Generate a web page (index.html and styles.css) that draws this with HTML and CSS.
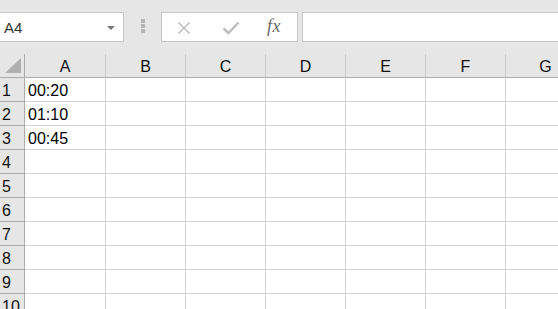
FILE: index.html
```html
<!DOCTYPE html>
<html>
<head>
<meta charset="utf-8">
<link rel="stylesheet" href="styles.css">
</head>
<body>
<div class="toolbar">
  <div class="namebox">
    <span class="name">A4</span>
    <span class="caret"></span>
  </div>
  <div class="grip"><i></i><i></i><i></i></div>
  <div class="buttons">
    <svg class="ico" width="14" height="14" viewBox="0 0 14 14"><path d="M1.5 1.5 L12.5 12.5 M12.5 1.5 L1.5 12.5" stroke="#bdbdbd" stroke-width="1.6" fill="none"/></svg>
    <svg class="ico" width="18" height="14" viewBox="0 0 18 14"><path d="M1.5 7.5 L6.5 12 L16.5 1.5" stroke="#bdbdbd" stroke-width="2.4" fill="none"/></svg>
    <span class="fx">fx</span>
  </div>
  <div class="formula"></div>
</div>
<div class="sheet">
  <div class="row head">
    <div class="rh corner"><span class="tri"></span></div>
    <div class="ch wide">A</div><div class="ch">B</div><div class="ch">C</div><div class="ch">D</div><div class="ch">E</div><div class="ch">F</div><div class="ch">G</div>
  </div>
  <div class="row"><div class="rh">1</div><div class="c wide">00:20</div><div class="c"></div><div class="c"></div><div class="c"></div><div class="c"></div><div class="c"></div><div class="c"></div></div>
  <div class="row"><div class="rh">2</div><div class="c wide">01:10</div><div class="c"></div><div class="c"></div><div class="c"></div><div class="c"></div><div class="c"></div><div class="c"></div></div>
  <div class="row"><div class="rh">3</div><div class="c wide">00:45</div><div class="c"></div><div class="c"></div><div class="c"></div><div class="c"></div><div class="c"></div><div class="c"></div></div>
  <div class="row"><div class="rh">4</div><div class="c wide"></div><div class="c"></div><div class="c"></div><div class="c"></div><div class="c"></div><div class="c"></div><div class="c"></div></div>
  <div class="row"><div class="rh">5</div><div class="c wide"></div><div class="c"></div><div class="c"></div><div class="c"></div><div class="c"></div><div class="c"></div><div class="c"></div></div>
  <div class="row"><div class="rh">6</div><div class="c wide"></div><div class="c"></div><div class="c"></div><div class="c"></div><div class="c"></div><div class="c"></div><div class="c"></div></div>
  <div class="row"><div class="rh">7</div><div class="c wide"></div><div class="c"></div><div class="c"></div><div class="c"></div><div class="c"></div><div class="c"></div><div class="c"></div></div>
  <div class="row"><div class="rh">8</div><div class="c wide"></div><div class="c"></div><div class="c"></div><div class="c"></div><div class="c"></div><div class="c"></div><div class="c"></div></div>
  <div class="row"><div class="rh">9</div><div class="c wide"></div><div class="c"></div><div class="c"></div><div class="c"></div><div class="c"></div><div class="c"></div><div class="c"></div></div>
  <div class="row"><div class="rh">10</div><div class="c wide"></div><div class="c"></div><div class="c"></div><div class="c"></div><div class="c"></div><div class="c"></div><div class="c"></div></div>
</div>
</body>
</html>
```

FILE: styles.css
```css
html, body {
  margin: 0;
  padding: 0;
  background: #e6e6e6;
  overflow: hidden;
  font-family: "Liberation Sans", Arial, sans-serif;
}
* { box-sizing: border-box; }

.toolbar {
  height: 54px;
  display: flex;
  align-items: flex-start;
  padding-top: 12px;
}
.namebox {
  width: 124px;
  height: 30px;
  background: #fff;
  border: 1px solid #c6c6c6;
  border-left: none;
  display: flex;
  align-items: center;
  justify-content: space-between;
  padding: 0 8px 0 4px;
}
.name {
  font-size: 15px;
  color: #333;
}
.caret {
  width: 0;
  height: 0;
  border-left: 4px solid transparent;
  border-right: 4px solid transparent;
  border-top: 4px solid #777;
  margin-top: 1px;
}
.grip {
  width: 37px;
  height: 30px;
  display: flex;
  flex-direction: column;
  align-items: center;
  justify-content: center;
  gap: 1px;
  padding-bottom: 2px;
}
.grip i {
  display: block;
  width: 4px;
  height: 4px;
  background: #b4b4b4;
}
.buttons {
  width: 137px;
  height: 30px;
  background: #fff;
  border: 1px solid #c6c6c6;
  display: flex;
  align-items: center;
  padding-left: 15px;
}
.ico { display: block; }
.buttons .ico:nth-child(1) { margin-top: 1px; }
.buttons .ico:nth-child(2) { margin-left: 31px; margin-top: 2px; }
.fx {
  margin-left: 27px;
  font-family: "Liberation Serif", "Times New Roman", serif;
  font-style: italic;
  font-size: 18px;
  color: #6a6a6a;
  margin-top: -2px;
  letter-spacing: 0.5px;
}
.formula {
  margin-left: 4px;
  flex: 1;
  height: 30px;
  background: #fff;
  border: 1px solid #c6c6c6;
  border-right: none;
}

.sheet {
  background: #fff;
}
.row {
  display: flex;
  height: 24px;
  background: #fff;
}
.row.head {
  height: 24px;
  background: #e6e6e6;
}
.rh {
  flex: 0 0 25px;
  background: #e6e6e6;
  border-right: 1px solid #ababab;
  border-bottom: 1px solid #ababab;
  font-size: 16px;
  color: #111;
  padding-left: 2px;
  padding-top: 1px;
  line-height: 23px;
  white-space: nowrap;
}
.corner {
  position: relative;
}
.tri {
  position: absolute;
  left: 5px;
  top: 4px;
  width: 0;
  height: 0;
  border-left: 16px solid transparent;
  border-bottom: 15px solid #b0b0b0;
}
.ch {
  flex: 0 0 80px;
  border-right: 1px solid #c9c9c9;
  border-bottom: 1px solid #ababab;
  text-align: center;
  font-size: 16px;
  color: #111;
  padding-top: 1px;
  line-height: 23px;
}
.ch.wide, .c.wide { flex-basis: 81px; }
.c {
  flex: 0 0 80px;
  border-right: 1px solid #d4d4d4;
  border-bottom: 1px solid #d4d4d4;
  font-size: 16px;
  color: #000;
  padding-left: 3px;
  padding-top: 1px;
  line-height: 23px;
}
```
